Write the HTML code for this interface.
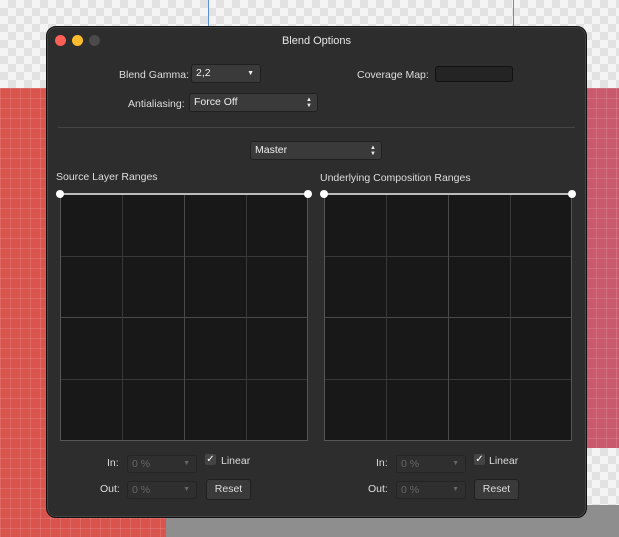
<!DOCTYPE html>
<html><head><style>
body{margin:0;width:619px;height:537px;overflow:hidden;position:relative;font-family:"Liberation Sans",sans-serif;
background-color:#f4f4f4;background-image:linear-gradient(45deg,#e2e2e2 25%,transparent 25%,transparent 75%,#e2e2e2 75%),linear-gradient(45deg,#e2e2e2 25%,transparent 25%,transparent 75%,#e2e2e2 75%);background-size:16px 16px;background-position:0 0,8px 8px}
.abs{position:absolute}
.red{left:0;top:88px;width:166px;height:449px;background:#d8544c;background-image:linear-gradient(rgba(255,255,255,.12) 1px,transparent 1px),linear-gradient(90deg,rgba(255,255,255,.12) 1px,transparent 1px);background-size:10px 10px}
.pink{left:586px;top:88px;width:40px;height:360px;background:#c95a6d;background-image:linear-gradient(rgba(255,255,255,.12) 1px,transparent 1px),linear-gradient(90deg,rgba(255,255,255,.12) 1px,transparent 1px);background-size:10px 10px}
.grey{left:166px;top:505px;width:453px;height:32px;background:#8e8e8e}
.win{left:46px;top:26px;width:539px;height:490px;background:#2d2d2d;border:1px solid #111;border-radius:10px;box-shadow:0 0 0 1px #444 inset}
.t{color:#ddd;font-size:10.5px;position:absolute;white-space:nowrap}
.field{position:absolute;background:#3a3a3a;border:1px solid #202020;border-radius:3px;color:#eee;font-size:10.5px;box-sizing:border-box;padding:0 0 0 4px}
.field span{position:absolute;right:6px;top:0}
.dis{background:#2f2f2f;color:#666;border-color:#252525}
.graph{position:absolute;top:167px;width:248px;height:247px;background:#181818;border:1px solid #555;box-sizing:border-box;
background-image:linear-gradient(90deg,transparent 61px,#383838 61px,#383838 62px,transparent 62px,transparent 123px,#4a4a4a 123px,#4a4a4a 124px,transparent 124px,transparent 185px,#383838 185px,#383838 186px,transparent 186px),
linear-gradient(transparent 61px,#383838 61px,#383838 62px,transparent 62px,transparent 122px,#4a4a4a 122px,#4a4a4a 123px,transparent 123px,transparent 184px,#383838 184px,#383838 185px,transparent 185px)}
.graph .top{position:absolute;left:-1px;right:-1px;top:-2px;height:2px;background:#bbb}
.dot{position:absolute;width:8px;height:8px;border-radius:50%;background:#fff;top:-5px}
</style></head><body>
<div class="abs red"></div><div class="abs pink"></div><div class="abs grey"></div>
<div class="abs" style="left:208px;top:0;width:1px;height:88px;background:#5b8fd8"></div>
<div class="abs" style="left:513px;top:0;width:1px;height:88px;background:#5b8fd8"></div>
<div class="abs win">
<div class="abs" style="left:8px;top:8px;width:11px;height:11px;border-radius:50%;background:#fe5f57"></div>
<div class="abs" style="left:25px;top:8px;width:11px;height:11px;border-radius:50%;background:#febb2e"></div>
<div class="abs" style="left:42px;top:8px;width:11px;height:11px;border-radius:50%;background:#4a4a4a"></div>
<div class="t" style="left:0;width:539px;text-align:center;top:8px;font-size:11px;color:#e6e6e6">Blend Options</div>
<div class="t" style="left:72px;top:42px">Blend Gamma:</div>
<div class="field" style="left:144px;top:37px;width:70px;height:19px;line-height:17px">2,2<span style="font-size:7px">▼</span></div>
<div class="t" style="left:310px;top:42px">Coverage Map:</div>
<div class="field" style="left:388px;top:39px;width:78px;height:16px;background:#242424;border-color:#111"></div>
<div class="t" style="left:81px;top:71px">Antialiasing:</div>
<div class="field" style="left:142px;top:66px;width:129px;height:19px;line-height:17px">Force Off<span style="font-size:6px;line-height:6px;top:3px;right:5px">▲<br>▼</span></div>
<div class="abs" style="left:11px;top:100px;width:517px;height:1px;background:#444"></div>
<div class="field" style="left:203px;top:114px;width:132px;height:19px;line-height:17px">Master<span style="font-size:6px;line-height:6px;top:3px;right:5px">▲<br>▼</span></div>
<div class="t" style="left:9px;top:144px">Source Layer Ranges</div>
<div class="t" style="left:273px;top:145px">Underlying Composition Ranges</div>
<div class="graph" style="left:13px"><div class="top"></div><div class="dot" style="left:-5px"></div><div class="dot" style="right:-5px"></div></div>
<div class="graph" style="left:277px"><div class="top"></div><div class="dot" style="left:-5px"></div><div class="dot" style="right:-5px"></div></div>
<div class="t" style="left:60px;top:430px">In:</div>
<div class="field dis" style="left:80px;top:428px;width:70px;height:18px;line-height:16px">0 %<span style="font-size:7px">▼</span></div>
<div class="abs" style="left:158px;top:427px;width:11px;height:11px;background:#444;border-radius:2px;color:#fff;font-size:10px;line-height:11px;text-align:center">✓</div>
<div class="t" style="left:174px;top:428px">Linear</div>
<div class="t" style="left:53px;top:456px">Out:</div>
<div class="field dis" style="left:80px;top:454px;width:70px;height:18px;line-height:16px">0 %<span style="font-size:7px">▼</span></div>
<div class="field" style="left:159px;top:452px;width:45px;height:21px;text-align:center;padding:0;line-height:19px;color:#ddd">Reset</div>
<div class="t" style="left:329px;top:430px">In:</div>
<div class="field dis" style="left:349px;top:428px;width:70px;height:18px;line-height:16px">0 %<span style="font-size:7px">▼</span></div>
<div class="abs" style="left:427px;top:427px;width:11px;height:11px;background:#444;border-radius:2px;color:#fff;font-size:10px;line-height:11px;text-align:center">✓</div>
<div class="t" style="left:442px;top:428px">Linear</div>
<div class="t" style="left:321px;top:456px">Out:</div>
<div class="field dis" style="left:349px;top:454px;width:70px;height:18px;line-height:16px">0 %<span style="font-size:7px">▼</span></div>
<div class="field" style="left:427px;top:452px;width:45px;height:21px;text-align:center;padding:0;line-height:19px;color:#ddd">Reset</div>
</div>
</body></html>
